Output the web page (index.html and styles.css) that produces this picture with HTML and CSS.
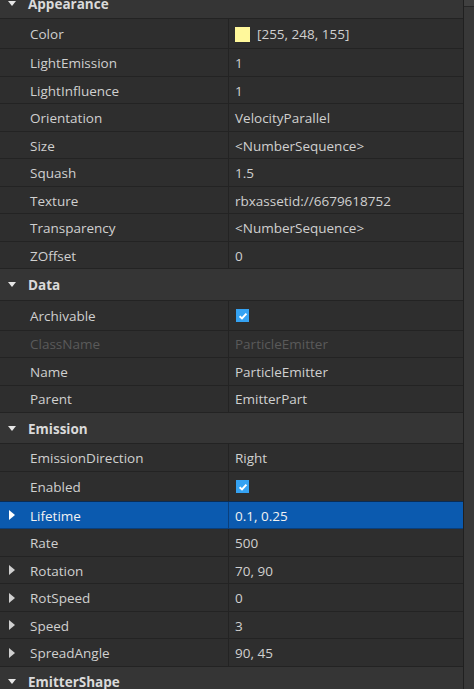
FILE: index.html
```html
<!DOCTYPE html>
<html>
<head>
<meta charset="utf-8">
<link rel="stylesheet" href="styles.css">
</head>
<body>
<div class="panel">
  <div class="list">
    <div class="cat"><span class="down"></span><span class="cat-name">Appearance</span></div>
    <div class="row tall"><div class="name">Color</div><div class="val"><span class="swatch"></span>[255, 248, 155]</div></div>
    <div class="row"><div class="name">LightEmission</div><div class="val">1</div></div>
    <div class="row"><div class="name">LightInfluence</div><div class="val">1</div></div>
    <div class="row"><div class="name">Orientation</div><div class="val">VelocityParallel</div></div>
    <div class="row"><div class="name">Size</div><div class="val">&lt;NumberSequence&gt;</div></div>
    <div class="row"><div class="name">Squash</div><div class="val">1.5</div></div>
    <div class="row"><div class="name">Texture</div><div class="val">rbxassetid://6679618752</div></div>
    <div class="row"><div class="name">Transparency</div><div class="val">&lt;NumberSequence&gt;</div></div>
    <div class="row"><div class="name">ZOffset</div><div class="val">0</div></div>

    <div class="cat"><span class="down"></span><span class="cat-name">Data</span></div>
    <div class="row tall"><div class="name">Archivable</div><div class="val"><span class="check"><svg viewBox="0 0 12 12" width="12" height="12"><path d="M2.6 6.2 L5 8.4 L9.4 3.6" fill="none" stroke="#fff" stroke-width="2"/></svg></span></div></div>
    <div class="row disabled"><div class="name">ClassName</div><div class="val">ParticleEmitter</div></div>
    <div class="row"><div class="name">Name</div><div class="val">ParticleEmitter</div></div>
    <div class="row"><div class="name">Parent</div><div class="val">EmitterPart</div></div>

    <div class="cat"><span class="down"></span><span class="cat-name">Emission</span></div>
    <div class="row"><div class="name">EmissionDirection</div><div class="val">Right</div></div>
    <div class="row tall"><div class="name">Enabled</div><div class="val"><span class="check"><svg viewBox="0 0 12 12" width="12" height="12"><path d="M2.6 6.2 L5 8.4 L9.4 3.6" fill="none" stroke="#fff" stroke-width="2"/></svg></span></div></div>
    <div class="row selected"><div class="name"><span class="right"></span>Lifetime</div><div class="val">0.1, 0.25</div></div>
    <div class="row"><div class="name">Rate</div><div class="val">500</div></div>
    <div class="row"><div class="name"><span class="right"></span>Rotation</div><div class="val">70, 90</div></div>
    <div class="row"><div class="name"><span class="right"></span>RotSpeed</div><div class="val">0</div></div>
    <div class="row"><div class="name"><span class="right"></span>Speed</div><div class="val">3</div></div>
    <div class="row"><div class="name"><span class="right"></span>SpreadAngle</div><div class="val">90, 45</div></div>

    <div class="cat"><span class="down"></span><span class="cat-name">EmitterShape</span></div>
  </div>
  <div class="scrollbar"><div class="sb-top"></div></div>
</div>
</body>
</html>
```
FILE: styles.css
```css
html, body {
  margin: 0;
  padding: 0;
  background: #2e2e2e;
  overflow: hidden;
}
body {
  font-family: "Open Sans", "Noto Sans", sans-serif;
  font-size: 13.5px;
  color: #d0d0d0;
}
.panel {
  display: flex;
  width: 474px;
  height: 689px;
  overflow: hidden;
}
.list {
  width: 463px;
  margin-top: -12px;
  flex: none;
}
.scrollbar {
  flex: 1;
  background: #383838;
  border-left: 1px solid #202020;
}
.sb-top {
  height: 6px;
  background: #404040;
  border-bottom: 1px solid #262626;
}
.cat {
  height: 31.25px;
  box-sizing: border-box;
  background: #353535;
  border-bottom: 1px solid #232323;
  display: flex;
  align-items: center;
  font-weight: 700;
  color: #dadada;
}
.down {
  width: 0;
  height: 0;
  border-left: 4.5px solid transparent;
  border-right: 4.5px solid transparent;
  border-top: 5px solid #e6e6e6;
  margin-left: 8px;
  margin-right: 12px;
}
.cat-name {
  padding-top: 1px;
}
.row {
  height: 27.5px;
  box-sizing: border-box;
  border-bottom: 1px solid #232323;
  display: flex;
  background: #2e2e2e;
}
.row.tall {
  height: 30px;
}
.name {
  width: 229px;
  flex: none;
  border-right: 1px solid #232323;
  display: flex;
  align-items: center;
  padding-left: 30px;
  padding-top: 1px;
  box-sizing: border-box;
  position: relative;
}
.val {
  flex: 1;
  display: flex;
  align-items: center;
  padding-left: 6px;
  padding-top: 1px;
}
.disabled .name, .disabled .val {
  color: #5a5a5a;
}
.right {
  position: absolute;
  left: 9px;
  top: 50%;
  margin-top: -5px;
  width: 0;
  height: 0;
  border-top: 5px solid transparent;
  border-bottom: 5px solid transparent;
  border-left: 6px solid #d0d0d0;
}
.selected {
  background: #0b5aaf;
  border-top: 1px solid #0a2c55;
  border-bottom: 1px solid #0a3f7c;
  margin-top: -1px;
  height: 28.5px;
  color: #f2f2f2;
}
.selected .name {
  border-right-color: #0a3f7c;
}
.selected .right {
  border-left-color: #ffffff;
}
.swatch {
  width: 15px;
  height: 15px;
  background: rgb(255, 248, 155);
  margin-right: 7px;
}
.check {
  width: 13px;
  height: 13px;
  background: #35a2f2;
  margin-left: 1px;
  display: flex;
  align-items: center;
  justify-content: center;
}
```
